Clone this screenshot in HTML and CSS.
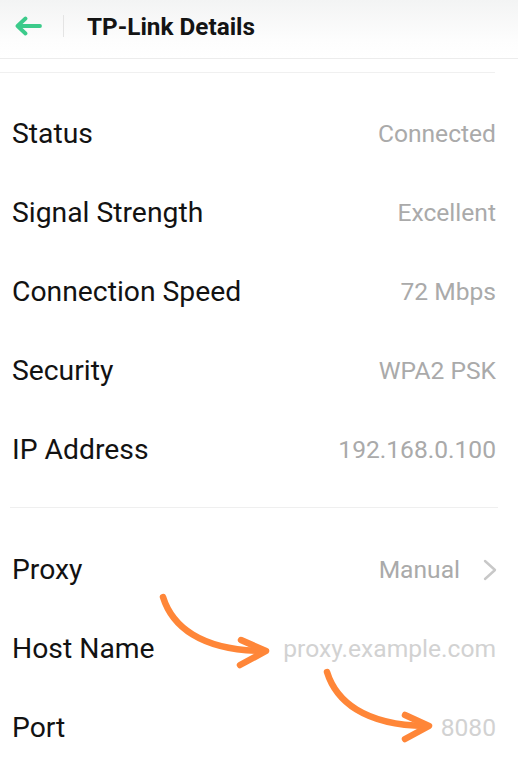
FILE: index.html
```html
<!DOCTYPE html>
<html>
<head>
<meta charset="utf-8">
<link rel="stylesheet" href="styles.css">
</head>
<body>
<div class="screen">
  <header class="topbar">
    <svg class="back" width="28" height="20" viewBox="0 0 28 20">
      <path d="M26 10 H4 M11.5 2.5 L3.5 10 L11.5 17.5" fill="none" stroke="#3ccb8b" stroke-width="3.8" stroke-linecap="round" stroke-linejoin="round"/>
    </svg>
    <span class="vsep"></span>
    <h1 class="title">TP-Link Details</h1>
  </header>
  <div class="subline"></div>
  <ul class="list first">
    <li class="row"><span class="label">Status</span><span class="value">Connected</span></li>
    <li class="row"><span class="label">Signal Strength</span><span class="value">Excellent</span></li>
    <li class="row"><span class="label">Connection Speed</span><span class="value">72 Mbps</span></li>
    <li class="row"><span class="label">Security</span><span class="value">WPA2 PSK</span></li>
    <li class="row"><span class="label">IP Address</span><span class="value">192.168.0.100</span></li>
  </ul>
  <div class="divider"></div>
  <ul class="list second">
    <li class="row"><span class="label">Proxy</span><span class="value">Manual<svg class="chev" width="14" height="22" viewBox="0 0 14 22"><path d="M2 2 L12 11 L2 20" fill="none" stroke="#c8c8c8" stroke-width="2.4" stroke-linecap="round" stroke-linejoin="round"/></svg></span></li>
    <li class="row"><span class="label">Host Name</span><span class="value faint">proxy.example.com</span></li>
    <li class="row"><span class="label">Port</span><span class="value faint">8080</span></li>
  </ul>
  <svg class="arrows" width="518" height="765" viewBox="0 0 518 765">
    <g fill="none" stroke="#ff8638" stroke-width="6.5" stroke-linecap="round" stroke-linejoin="round">
      <path d="M163 597 C172 626 200 650 262 651"/>
      <path d="M241 640 L266 651 L240 665"/>
      <path d="M327 672 C336 701 364 725 425 726"/>
      <path d="M405 715 L429 726 L405 739"/>
    </g>
  </svg>
</div>
</body>
</html>
```

FILE: styles.css
```css
* { box-sizing: border-box; }
html, body { margin: 0; padding: 0; background: #fff; }
body { font-family: Roboto, "Noto Sans", "Liberation Sans", sans-serif; color: #111; }
.screen { position: relative; width: 518px; height: 765px; overflow: hidden; background: #fff; }
.topbar {
  height: 59px;
  display: flex;
  align-items: center;
  padding: 0 0 6px 14px;
  background: linear-gradient(#f3f4f4, #fdfdfd 70%, #fff);
  border-bottom: 1px solid #ececec;
}
.back { flex: none; }
.vsep { width: 1px; height: 22px; background: #e4e4e4; margin: 0 0 0 21px; }
.title { margin: 0 0 0 23px; font-size: 24.3px; font-weight: 700; color: #141414; letter-spacing: 0; }
.subline { height: 1px; background: #f0f0f0; margin: 13px 23px 0 0; }
.list { list-style: none; margin: 0; padding: 0; }
.list.first { padding-top: 21px; }
.list.second { padding-top: 22px; }
.row {
  height: 79px;
  display: flex;
  align-items: center;
  justify-content: space-between;
  padding: 0 22px 0 12px;
}
.label { font-size: 28.3px; color: #121212; }
.value { font-size: 24.6px; color: #aaaaaa; display: flex; align-items: center; }
.value.faint { color: #d2d2d2; }
.chev { margin-left: 23px; margin-right: -1px; }
.divider { height: 1px; background: #efefef; margin: 18px 20px 0 10px; }
.arrows { position: absolute; left: 0; top: 0; pointer-events: none; }
```
